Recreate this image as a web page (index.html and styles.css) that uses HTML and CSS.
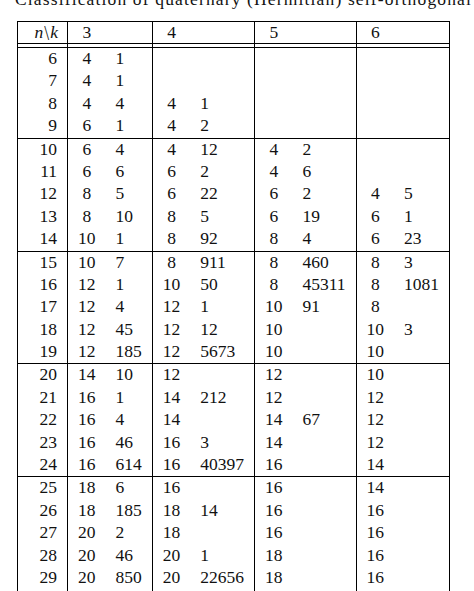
FILE: index.html
```html
<!DOCTYPE html>
<html lang="en">
<head>
<meta charset="utf-8">
<title>Classification of quaternary self-orthogonal codes</title>
<link rel="stylesheet" href="styles.css">
</head>
<body>
<div class="page">
  <p class="caption">Classification of quaternary (Hermitian) self-orthogonal codes</p>
  <table class="codes">
    <thead>
      <tr><th class="n"><i>n</i><span class="bs">\</span><i>k</i></th><th class="c">3</th><th class="l"></th><th class="c">4</th><th class="l"></th><th class="c">5</th><th class="l"></th><th class="c">6</th><th class="l"></th></tr>
    </thead>
    <tbody>
      <tr class="gap"><td class="n"></td><td class="c"></td><td class="l"></td><td class="c"></td><td class="l"></td><td class="c"></td><td class="l"></td><td class="c"></td><td class="l"></td></tr>
      <tr class="grp"><td class="n">6</td><td class="c">4</td><td class="l">1</td><td class="c"></td><td class="l"></td><td class="c"></td><td class="l"></td><td class="c"></td><td class="l"></td></tr>
      <tr><td class="n">7</td><td class="c">4</td><td class="l">1</td><td class="c"></td><td class="l"></td><td class="c"></td><td class="l"></td><td class="c"></td><td class="l"></td></tr>
      <tr><td class="n">8</td><td class="c">4</td><td class="l">4</td><td class="c">4</td><td class="l">1</td><td class="c"></td><td class="l"></td><td class="c"></td><td class="l"></td></tr>
      <tr><td class="n">9</td><td class="c">6</td><td class="l">1</td><td class="c">4</td><td class="l">2</td><td class="c"></td><td class="l"></td><td class="c"></td><td class="l"></td></tr>

      <tr class="grp"><td class="n">10</td><td class="c">6</td><td class="l">4</td><td class="c">4</td><td class="l">12</td><td class="c">4</td><td class="l">2</td><td class="c"></td><td class="l"></td></tr>
      <tr><td class="n">11</td><td class="c">6</td><td class="l">6</td><td class="c">6</td><td class="l">2</td><td class="c">4</td><td class="l">6</td><td class="c"></td><td class="l"></td></tr>
      <tr><td class="n">12</td><td class="c">8</td><td class="l">5</td><td class="c">6</td><td class="l">22</td><td class="c">6</td><td class="l">2</td><td class="c">4</td><td class="l">5</td></tr>
      <tr><td class="n">13</td><td class="c">8</td><td class="l">10</td><td class="c">8</td><td class="l">5</td><td class="c">6</td><td class="l">19</td><td class="c">6</td><td class="l">1</td></tr>
      <tr><td class="n">14</td><td class="c">10</td><td class="l">1</td><td class="c">8</td><td class="l">92</td><td class="c">8</td><td class="l">4</td><td class="c">6</td><td class="l">23</td></tr>

      <tr class="grp"><td class="n">15</td><td class="c">10</td><td class="l">7</td><td class="c">8</td><td class="l">911</td><td class="c">8</td><td class="l">460</td><td class="c">8</td><td class="l">3</td></tr>
      <tr><td class="n">16</td><td class="c">12</td><td class="l">1</td><td class="c">10</td><td class="l">50</td><td class="c">8</td><td class="l">45311</td><td class="c">8</td><td class="l">1081</td></tr>
      <tr><td class="n">17</td><td class="c">12</td><td class="l">4</td><td class="c">12</td><td class="l">1</td><td class="c">10</td><td class="l">91</td><td class="c">8</td><td class="l"></td></tr>
      <tr><td class="n">18</td><td class="c">12</td><td class="l">45</td><td class="c">12</td><td class="l">12</td><td class="c">10</td><td class="l"></td><td class="c">10</td><td class="l">3</td></tr>
      <tr><td class="n">19</td><td class="c">12</td><td class="l">185</td><td class="c">12</td><td class="l">5673</td><td class="c">10</td><td class="l"></td><td class="c">10</td><td class="l"></td></tr>

      <tr class="grp"><td class="n">20</td><td class="c">14</td><td class="l">10</td><td class="c">12</td><td class="l"></td><td class="c">12</td><td class="l"></td><td class="c">10</td><td class="l"></td></tr>
      <tr><td class="n">21</td><td class="c">16</td><td class="l">1</td><td class="c">14</td><td class="l">212</td><td class="c">12</td><td class="l"></td><td class="c">12</td><td class="l"></td></tr>
      <tr><td class="n">22</td><td class="c">16</td><td class="l">4</td><td class="c">14</td><td class="l"></td><td class="c">14</td><td class="l">67</td><td class="c">12</td><td class="l"></td></tr>
      <tr><td class="n">23</td><td class="c">16</td><td class="l">46</td><td class="c">16</td><td class="l">3</td><td class="c">14</td><td class="l"></td><td class="c">12</td><td class="l"></td></tr>
      <tr><td class="n">24</td><td class="c">16</td><td class="l">614</td><td class="c">16</td><td class="l">40397</td><td class="c">16</td><td class="l"></td><td class="c">14</td><td class="l"></td></tr>

      <tr class="grp"><td class="n">25</td><td class="c">18</td><td class="l">6</td><td class="c">16</td><td class="l"></td><td class="c">16</td><td class="l"></td><td class="c">14</td><td class="l"></td></tr>
      <tr><td class="n">26</td><td class="c">18</td><td class="l">185</td><td class="c">18</td><td class="l">14</td><td class="c">16</td><td class="l"></td><td class="c">16</td><td class="l"></td></tr>
      <tr><td class="n">27</td><td class="c">20</td><td class="l">2</td><td class="c">18</td><td class="l"></td><td class="c">16</td><td class="l"></td><td class="c">16</td><td class="l"></td></tr>
      <tr><td class="n">28</td><td class="c">20</td><td class="l">46</td><td class="c">20</td><td class="l">1</td><td class="c">18</td><td class="l"></td><td class="c">16</td><td class="l"></td></tr>
      <tr class="last"><td class="n">29</td><td class="c">20</td><td class="l">850</td><td class="c">20</td><td class="l">22656</td><td class="c">18</td><td class="l"></td><td class="c">16</td><td class="l"></td></tr>
    </tbody>
  </table>
</div>
</body>
</html>
```

FILE: styles.css
```css
html {
  overflow: hidden;
  background: #fff;
}

body {
  margin: 0;
  font-family: "Liberation Serif", "Times New Roman", serif;
  font-size: 17.5px;
  color: #111;
}

.page {
  padding-left: 15px;
}

.caption {
  margin: -11px 0 0 0;
  line-height: 20px;
  letter-spacing: 1.15px;
  white-space: nowrap;
  overflow: hidden;
}

.codes {
  margin: 12px 0 0 2px;
  border-collapse: separate;
  border-spacing: 0;
  border-top: 1px solid #000;
  border-left: 1px solid #000;
}

.codes th,
.codes td {
  padding: 0 10px 2.4px 10px;
  line-height: 20px;
  font-weight: normal;
  white-space: nowrap;
}

.codes th {
  padding-bottom: 1px;
  border-bottom: 1px solid #000;
}

.codes .n {
  width: 29px;
  text-align: right;
  border-right: 1px solid #000;
}

.codes th.n {
  padding-right: 9px;
}

.codes .bs {
  display: inline-block;
  transform: scaleY(1.25);
  margin: 0 1px;
}

.codes .c {
  text-align: center;
}

.codes .l {
  text-align: left;
  border-right: 1px solid #000;
}

.codes tr.gap td {
  padding: 0;
  height: 3px;
  line-height: 0;
}

.codes tr.grp td {
  border-top: 1px solid #000;
}

.codes tr.last td {
  padding-bottom: 20px;
}
```
